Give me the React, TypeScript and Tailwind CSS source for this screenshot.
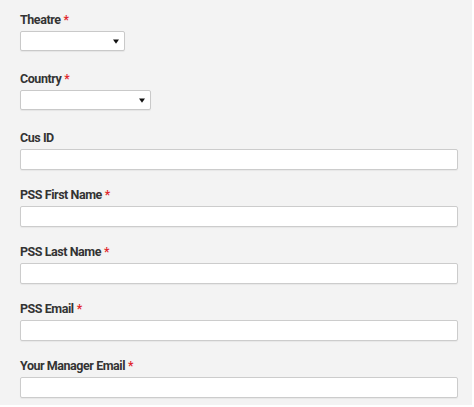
import React from "react";

type Field = {
  label: string;
  required: boolean;
  kind: "select" | "input";
  width?: string;
};

const FIELDS: Field[] = [
  { label: "Theatre", required: true, kind: "select", width: "w-[105px]" },
  { label: "Country", required: true, kind: "select", width: "w-[131px]" },
  { label: "Cus ID", required: false, kind: "input" },
  { label: "PSS First Name", required: true, kind: "input" },
  { label: "PSS Last Name", required: true, kind: "input" },
  { label: "PSS Email", required: true, kind: "input" },
  { label: "Your Manager Email", required: true, kind: "input" },
];

function Label({ text, required }: { text: string; required: boolean }) {
  return (
    <label className="block text-[12.5px] leading-4 font-bold tracking-[-0.45px] text-[#333333] mb-[3px]">
      {text}
      {required && <span className="text-[#e0262b] ml-[3px] text-[12px]">*</span>}
    </label>
  );
}

function Dropdown({ width }: { width: string }) {
  return (
    <div className={`relative h-5 ${width}`}>
      <select className="appearance-none w-full h-full bg-white border border-[#c9c9c9] rounded-[2px] shadow-[0_1px_1px_rgba(0,0,0,0.06)] outline-none">
        <option value=""></option>
      </select>
      {/* arrow over the select */}
      <svg
        className="absolute right-[6px] top-[8px] pointer-events-none"
        width="6"
        height="5"
        viewBox="0 0 6 5"
      >
        <path d="M0 0.5 H6 L3 4.8 Z" fill="#111111" />
      </svg>
    </div>
  );
}

export default function App() {
  return (
    <div className="w-[474px] h-[407px] bg-white overflow-hidden" style={{ fontFamily: "Roboto, 'Liberation Sans', sans-serif" }}>
      <div className="w-[472px] h-[405px] bg-[#f3f3f3] pl-5 pr-[14px] pt-3">
        {FIELDS.map((f) => (
          <div key={f.label} className={f.kind === "select" ? "mb-5" : "mb-[17px]"}>
            <Label text={f.label} required={f.required} />
            {f.kind === "select" ? (
              <Dropdown width={f.width ?? "w-full"} />
            ) : (
              <input
                type="text"
                className="block w-full h-[21px] bg-white border border-[#cccccc] rounded-[2px] shadow-[0_1px_1px_rgba(0,0,0,0.05)] outline-none"
              />
            )}
          </div>
        ))}
      </div>
    </div>
  );
}
